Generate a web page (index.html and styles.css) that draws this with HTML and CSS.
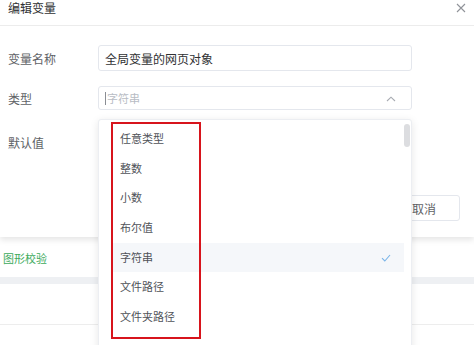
FILE: index.html
```html
<!DOCTYPE html>
<html lang="zh">
<head>
<meta charset="utf-8">
<link rel="stylesheet" href="styles.css">
</head>
<body>
<div class="dialog">
  <div class="dlg-header">
    <span class="dlg-title">编辑变量</span>
    <svg class="dlg-close" width="10" height="10" viewBox="0 0 10 10"><path d="M1 1L9 9M9 1L1 9" stroke="#909399" stroke-width="1.1" fill="none"/></svg>
  </div>
  <div class="dlg-body">
    <div class="form-row row-name">
      <label class="form-label">变量名称</label>
      <div class="input">全局变量的网页对象</div>
    </div>
    <div class="form-row row-type">
      <label class="form-label">类型</label>
      <div class="input select">
        <span class="caret"></span><span class="placeholder">字符串</span>
        <svg class="arrow" width="10" height="6" viewBox="0 0 10 6"><path d="M1 5L5 1.2L9 5" stroke="#a8abb2" stroke-width="1.1" fill="none"/></svg>
      </div>
    </div>
    <div class="form-row row-default">
      <label class="form-label">默认值</label>
    </div>
  </div>
  <div class="dlg-footer">
    <button class="btn">取消</button>
  </div>
</div>
<div class="page">
  <div class="page-link">图形校验</div>
  <div class="page-bar"></div>
  <div class="page-line"></div>
</div>

<div class="dropdown">
  <ul class="options">
    <li class="option">任意类型</li>
    <li class="option">整数</li>
    <li class="option">小数</li>
    <li class="option">布尔值</li>
    <li class="option selected">字符串
      <svg class="check" width="10" height="8" viewBox="0 0 10 8"><path d="M1 4.2L3.8 7L9 1" stroke="#79b4e8" stroke-width="1.1" fill="none"/></svg>
    </li>
    <li class="option">文件路径</li>
    <li class="option">文件夹路径</li>
  </ul>
  <div class="thumb"></div>
</div>
<div class="annot"></div>
</body>
</html>
```

FILE: styles.css
```css
* { box-sizing: border-box; }
html, body { margin: 0; padding: 0; }
body {
  width: 474px;
  height: 345px;
  overflow: hidden;
  background: #fff;
  font-family: "Noto Sans CJK SC", "Noto Sans", sans-serif;
  font-size: 12px;
  color: #606266;
  position: relative;
}
.dialog {
  height: 237px;
  background: #fff;
  box-shadow: 0 3px 6px rgba(0,0,0,0.10);
  position: relative;
  z-index: 1;
  display: flex;
  flex-direction: column;
}
.dlg-header {
  height: 26px;
  border-bottom: 1px solid #ececec;
  display: flex;
  justify-content: space-between;
  align-items: flex-start;
  padding: 0 8px 0 8px;
}
.dlg-title {
  color: #303133;
  font-size: 12px;
  line-height: 16px;
}
.dlg-close { margin-top: 3px; margin-right: 0px; }
.dlg-body { padding-top: 19px; }
.form-row {
  display: flex;
  align-items: center;
}
.form-label {
  width: 98px;
  padding-left: 8px;
  color: #606266;
  font-size: 12px;
}
.input {
  width: 314px;
  height: 26px;
  border: 1px solid #e4e7ed;
  border-radius: 3px;
  padding-left: 6px;
  display: flex;
  align-items: center;
  color: #303133;
  font-size: 12px;
}
.row-type { margin-top: 15px; }
.select {
  height: 24px;
  position: relative;
}
.caret {
  width: 1px;
  height: 13px;
  background: #8a8d93;
  margin-right: 1px;
}
.placeholder { color: #b8bcc4; font-size: 11px; }
.arrow { position: absolute; right: 15px; top: 9px; }
.row-default { margin-top: 20px; height: 24px; }
.dlg-footer {
  margin-top: auto;
  padding: 0 14px 16px 0;
  display: flex;
  justify-content: flex-end;
}
.btn {
  width: 72px;
  height: 26px;
  background: #fff;
  border: 1px solid #e4e7ed;
  border-radius: 3px;
  font-family: inherit;
  font-size: 12px;
  color: #606266;
  padding: 0;
}
.page { display: flex; flex-direction: column; }
.page-link {
  color: #3daa5c;
  font-size: 11px;
  line-height: 16px;
  padding-left: 3px;
  margin-top: 13px;
}
.page-bar {
  height: 7px;
  background: #eef0f3;
  margin-top: 11px;
}
.page-line {
  height: 1px;
  background: #ededed;
  margin-top: 40px;
}
.dropdown {
  position: absolute;
  left: 98px;
  top: 119px;
  width: 314px;
  height: 240px;
  background: #fff;
  border: 1px solid #eceef2;
  border-radius: 3px;
  box-shadow: 0 2px 8px rgba(0,0,0,0.10);
  z-index: 5;
}
.options {
  list-style: none;
  margin: 0;
  padding: 4px 7px 0 14px;
}
.option {
  height: 29.67px;
  line-height: 29.67px;
  padding-left: 7px;
  font-size: 11px;
  color: #4f5258;
  position: relative;
}
.option.selected { background: #f5f7fa; }
.check { position: absolute; right: 13px; top: 11px; }
.thumb {
  position: absolute;
  right: 1px;
  top: 4px;
  width: 6px;
  height: 23px;
  border-radius: 3px;
  background: #dcdde0;
}
.annot {
  position: absolute;
  left: 111px;
  top: 122px;
  width: 90px;
  height: 217px;
  border: 2px solid #d7141c;
  z-index: 6;
}
```
